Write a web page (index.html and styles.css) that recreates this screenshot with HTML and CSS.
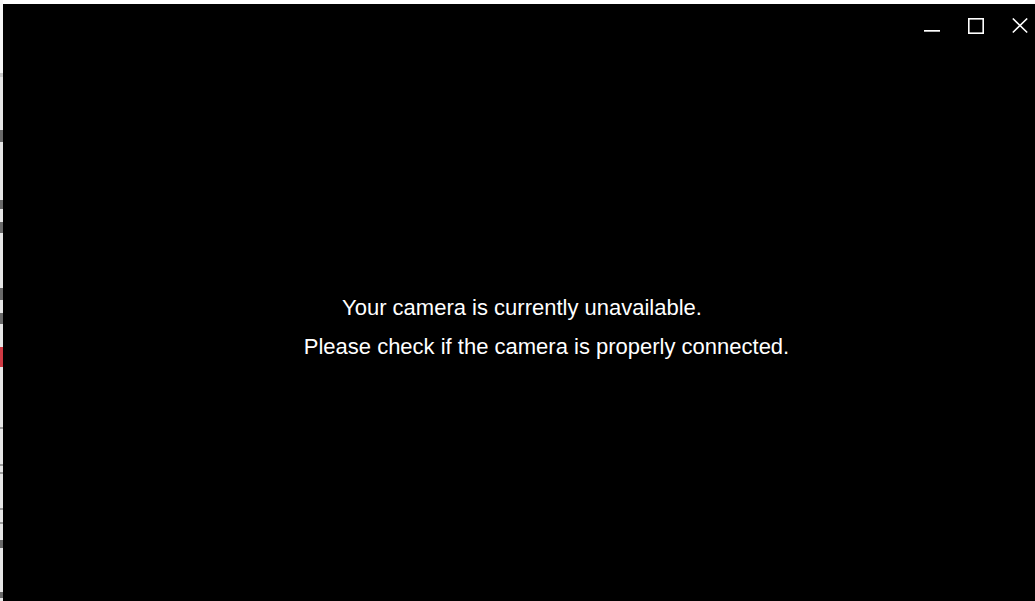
FILE: index.html
```html
<!DOCTYPE html>
<html lang="en">
<head>
<meta charset="utf-8">
<title>Camera</title>
<link rel="stylesheet" href="styles.css">
</head>
<body>
<div class="desktop">
  <div class="sliver">
    <div class="seg s-white"></div>
    <div class="seg s-rule"></div>
    <div class="seg s-gap" style="height:53px"></div>
    <div class="seg s-dark" style="height:12px"></div>
    <div class="seg s-gap" style="height:58px"></div>
    <div class="seg s-dark" style="height:9px"></div>
    <div class="seg s-gap" style="height:13px"></div>
    <div class="seg s-dark" style="height:11px"></div>
    <div class="seg s-gap" style="height:55px"></div>
    <div class="seg s-dark" style="height:12px"></div>
    <div class="seg s-gap" style="height:13px"></div>
    <div class="seg s-dark" style="height:11px"></div>
    <div class="seg s-gap" style="height:23px"></div>
    <div class="seg s-red"></div>
    <div class="seg s-gap" style="height:60px"></div>
    <div class="seg s-line"></div>
    <div class="seg s-gap" style="height:35px"></div>
    <div class="seg s-line"></div>
    <div class="seg s-gap" style="height:6px"></div>
    <div class="seg s-line"></div>
    <div class="seg s-gap" style="height:34px"></div>
    <div class="seg s-line"></div>
    <div class="seg s-gap" style="height:12px"></div>
    <div class="seg s-line"></div>
    <div class="seg s-gap" style="height:16px"></div>
    <div class="seg s-dark" style="height:8px"></div>
    <div class="seg s-gap" style="height:44px"></div>
    <div class="seg s-dark" style="height:6px"></div>
  </div>
  <div class="window">
    <div class="titlebar">
      <span class="ctl" aria-label="Minimize">
        <svg viewBox="0 0 16 16" width="16" height="16"><rect x="0" y="12" width="16" height="1.7" fill="#fff"/></svg>
      </span>
      <span class="ctl" aria-label="Maximize">
        <svg viewBox="0 0 16 16" width="16" height="16"><rect x="0.8" y="0.8" width="14.4" height="14.4" fill="none" stroke="#fff" stroke-width="1.6"/></svg>
      </span>
      <span class="ctl" aria-label="Close">
        <svg viewBox="0 0 16 16" width="16" height="16"><path d="M0.8 0.5 L15.2 14.5 M15.2 0.5 L0.8 14.5" stroke="#fff" stroke-width="1.6" fill="none"/></svg>
      </span>
    </div>
    <div class="message">
      <p class="line line-1">Your camera is currently unavailable.</p>
      <p class="line line-2">Please check if the camera is properly connected.</p>
    </div>
  </div>
</div>
</body>
</html>
```
FILE: styles.css
```css
html, body {
  margin: 0;
  padding: 0;
  background: #ffffff;
}
.desktop {
  display: flex;
  width: 1035px;
  height: 601px;
  overflow: hidden;
}
.sliver {
  width: 3px;
  flex: 0 0 3px;
  display: flex;
  flex-direction: column;
  background: #e6e6e6;
}
.seg { flex: 0 0 auto; width: 3px; }
.s-white { height: 73px; background: #f7f7f7; }
.s-rule { height: 4px; background: #cacaca; }
.s-gap { background: #e6e6e6; }
.s-dark { background: #6a6a6a; }
.s-red { height: 20px; background: #cf3a43; }
.s-line { height: 2px; background: #9c9c9c; }
.window {
  flex: 1 1 auto;
  margin-top: 4px;
  background: #000000;
  display: flex;
  flex-direction: column;
}
.titlebar {
  display: flex;
  justify-content: flex-end;
  gap: 28px;
  padding: 14px 7px 0 0;
  height: 16px;
}
.ctl {
  display: block;
  width: 16px;
  height: 16px;
}
.ctl svg { display: block; }
.message {
  margin-top: 261px;
  display: flex;
  flex-direction: column;
  gap: 13px;
  font-family: "Liberation Sans", Arial, sans-serif;
  font-size: 22px;
  line-height: 26px;
  color: #ffffff;
}
.line {
  margin: 0;
  text-align: center;
}
.line-1 { padding-left: 6px; }
.line-2 { padding-left: 55px; }
```
